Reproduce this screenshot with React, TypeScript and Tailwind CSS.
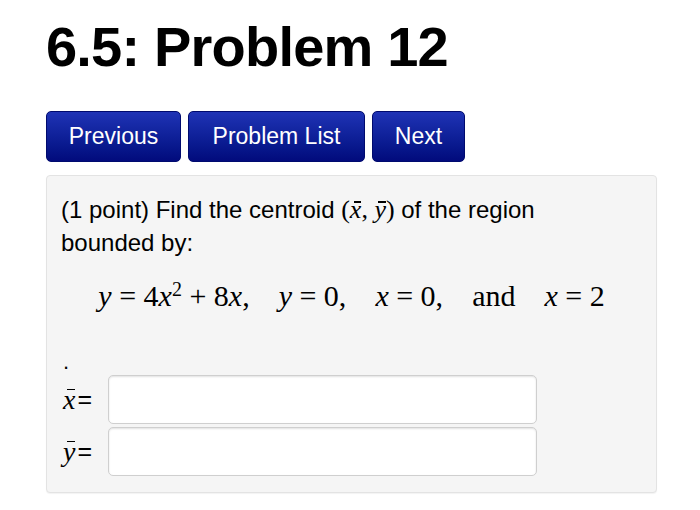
const buttons = [
  { label: 'Previous', w: 'w-[135px]' },
  { label: 'Problem List', w: 'w-[177px]' },
  { label: 'Next', w: 'w-[93px]' },
];

function Bar({ children, top = 'top-[8px]' }: { children: string; top?: string }) {
  return (
    <span className="relative inline-block italic">
      <span className={`absolute left-[4px] right-[0px] h-[1.5px] bg-black ${top}`} />
      {children}
    </span>
  );
}

function Answer({ label }: { label: string }) {
  return (
    <div className="flex items-center">
      <span className="flex w-[47px] items-center pl-[2px] font-['Liberation_Serif',serif] text-[28px] text-black">
        <Bar top="top-[10px]">{label}</Bar>
        <span className="ml-[2px] font-['Liberation_Sans',sans-serif] text-[25px]">=</span>
      </span>
      <div className="h-[49px] w-[429px] rounded-[5px] border border-[#cfcfcf] bg-white shadow-[inset_0_1px_2px_rgba(0,0,0,0.12)]" />
    </div>
  );
}

export default function App() {
  return (
    <div className="h-[510px] w-[700px] bg-white pl-[46px] pt-[19px] font-['Liberation_Sans',Arial,sans-serif] text-black">
      <h1 className="text-[56px] font-bold leading-none tracking-[-0.8px]">6.5: Problem 12</h1>

      <div className="mt-[36px] flex gap-[7px]">
        {buttons.map((b) => (
          <button
            key={b.label}
            className={`h-[51px] ${b.w} rounded-[5px] border border-[#000a6e] bg-gradient-to-b from-[#1f33b6] to-[#020a7c] text-[23px] text-white`}
          >
            {b.label}
          </button>
        ))}
      </div>

      <div className="mt-[13px] w-[611px] rounded-[4px] border border-[#e3e3e3] bg-[#f5f5f5] pb-[16px] pl-[14px] pr-[14px] pt-[17px] shadow-[0_1px_1px_rgba(0,0,0,0.05)]">
        <p className="text-[24px] leading-[33px]">
          (1 point) Find the centroid{' '}
          <span className="font-['Liberation_Serif',serif] text-[26px]">
            (<Bar>x</Bar>, <Bar>y</Bar>)
          </span>{' '}
          of the region
          <br />
          bounded by:
        </p>

        <div className="mt-[22px] flex justify-center gap-[29px] font-['Liberation_Serif',serif] text-[30px] leading-none">
          <span>
            <i>y</i> = 4<i>x</i>
            <sup className="text-[20px]">2</sup> + 8<i>x</i>,
          </span>
          <span>
            <i>y</i> = 0,
          </span>
          <span>
            <i>x</i> = 0,
          </span>
          <span>and</span>
          <span>
            <i>x</i> = 2
          </span>
        </div>

        <div className="mt-[40px] pl-[2px] text-[22px] leading-[22px]">.</div>

        <div className="mt-[2px] flex flex-col gap-[3px]">
          <Answer label="x" />
          <Answer label="y" />
        </div>
      </div>
    </div>
  );
}
